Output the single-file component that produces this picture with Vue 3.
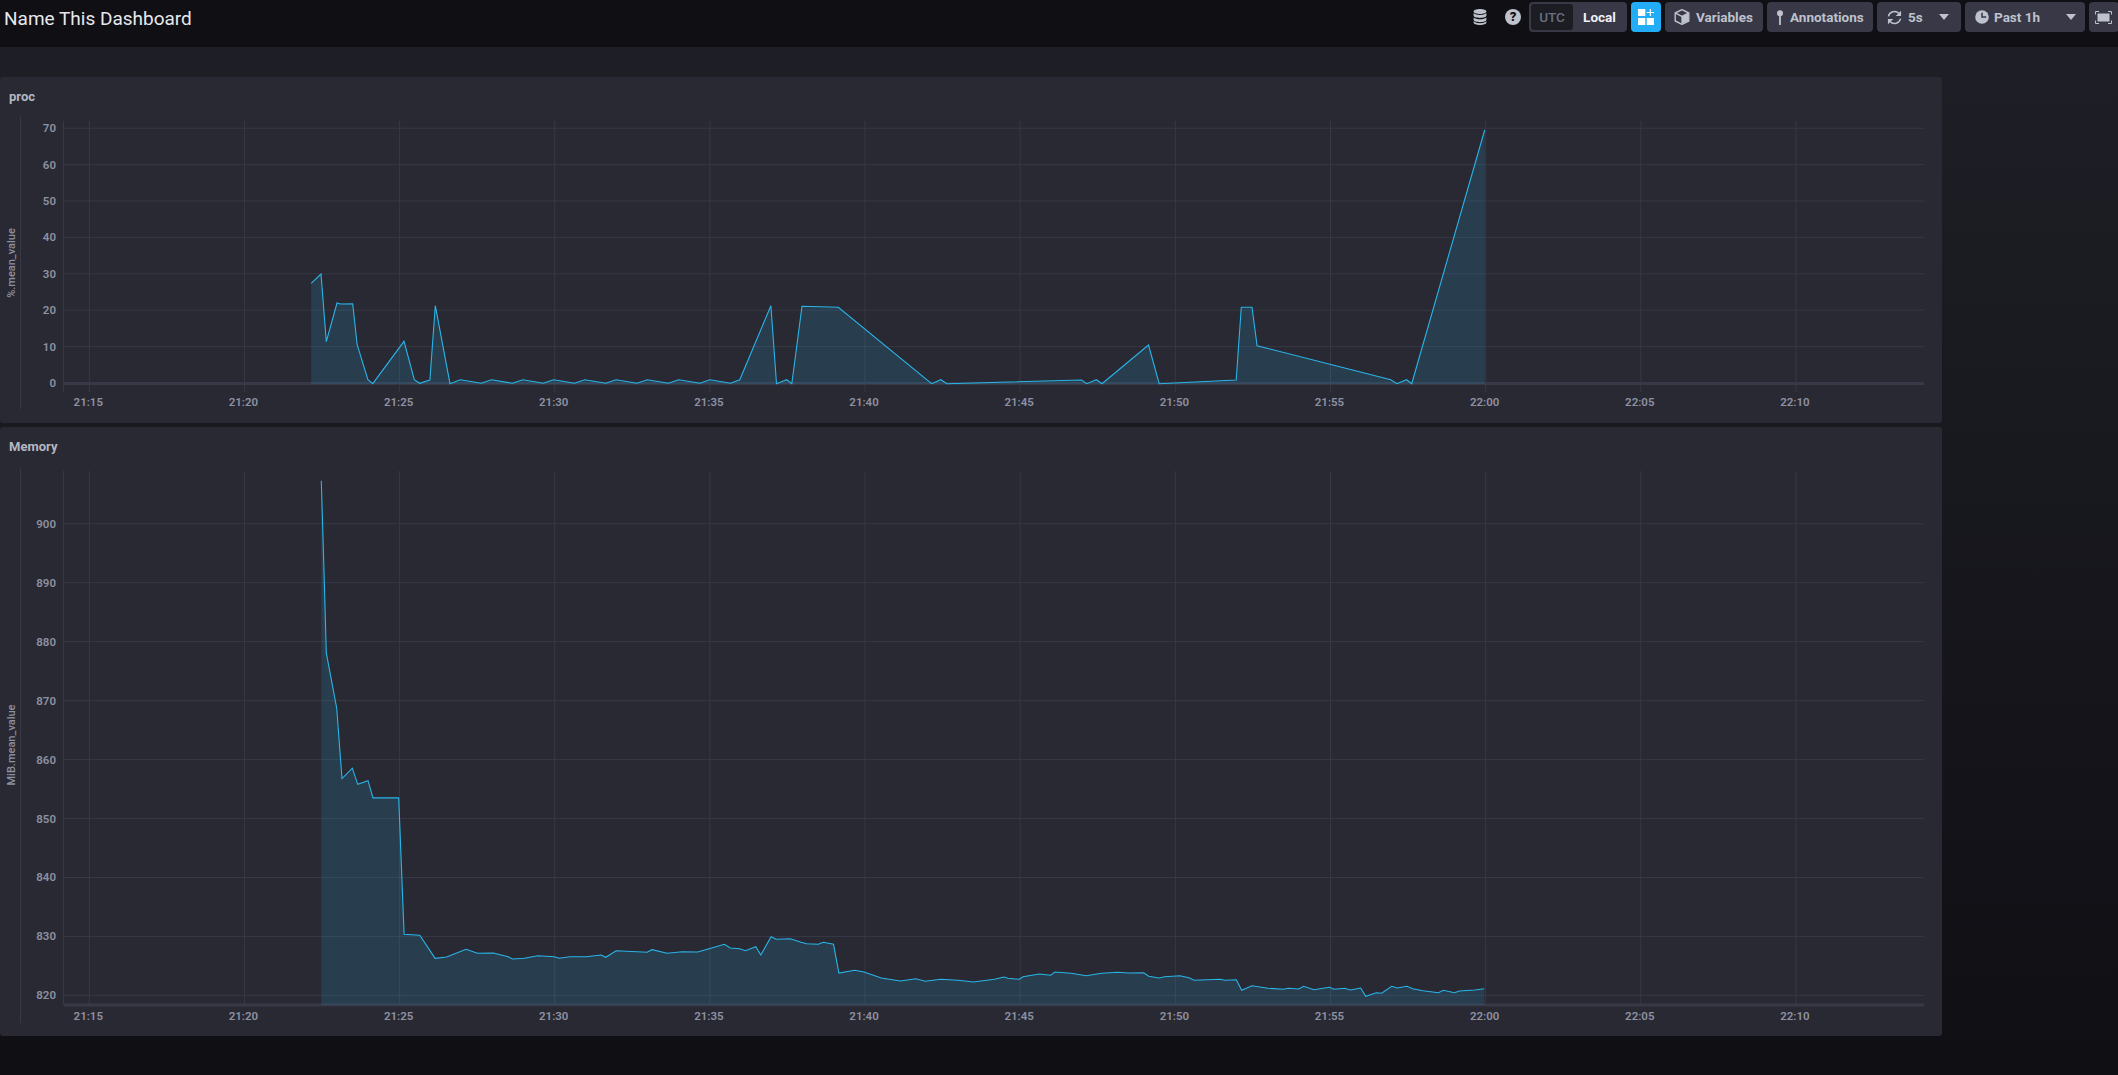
<script setup>
// minutes past 21:15 are turned into pixels the same way for both graphs
const xAt = (minutes) => 89.3 + minutes * 31.03

const timeLabels = ['21:15', '21:20', '21:25', '21:30', '21:35', '21:40', '21:45', '21:50', '21:55', '22:00', '22:05', '22:10']
const timeTicks = timeLabels.map((label, i) => ({ label, x: xAt(i * 5) }))

const procLine = [
  [311.2, 283.3], [321, 274], [326.3, 341.7], [337, 303], [340.6, 304], [352.7, 303.7], [357.1, 344.3], [367.9, 379.7],
  [372.8, 383.7], [404, 341.3], [414.3, 379.7], [419.6, 383.3], [429.9, 380], [435.3, 305.7], [450, 383.7], [460.3, 379.7],
  [481.3, 383.3], [491.5, 379.7], [512.5, 383.3], [522.8, 379.7], [543.3, 383.3], [553.6, 379.7], [574.6, 383.3], [584.8, 379.7],
  [605.8, 383.3], [616, 379.7], [637, 383.3], [647.3, 379.7], [668.3, 383.3], [678.6, 379.7], [700, 383.3], [709.7, 379.7],
  [730.6, 383.3], [739.8, 379.7], [770.9, 305.7], [776.5, 383.7], [786.7, 379.7], [791.8, 383.7], [802, 306.3], [838.3, 307.3],
  [931.6, 383.7], [940.8, 379.7], [946.9, 383.7], [1081.6, 380], [1086.7, 383.7], [1096.4, 379.7], [1102, 383.7], [1148.5, 345],
  [1159.2, 383.7], [1236.2, 380], [1241.3, 307.3], [1252, 307.3], [1257.1, 345.7], [1390.8, 379.7], [1396.9, 383.7],
  [1406.6, 379.7], [1411.7, 383.7], [1484.7, 130]
]

const memoryLine = [
  [321.3, 480.7], [324.3, 581.4], [326.3, 652.9], [336.7, 708.2], [342, 778.6], [352.3, 768.2], [357.7, 784.3], [368, 780.7],
  [373, 797.9], [398.7, 797.9], [404.1, 934.3], [419.8, 935.3], [435.1, 958.3], [446.6, 957], [466.1, 949.3], [477.6, 953.3],
  [493.3, 953], [508.2, 956.7], [512.4, 959], [524.3, 958.3], [537.7, 955.7], [554.5, 956.7], [559.1, 958.3], [569.8, 956.7],
  [585.9, 956.7], [601.2, 955], [605.8, 957.3], [616.1, 950.7], [647.1, 952.3], [652.1, 949.7], [667, 953.3], [682.3, 951.7],
  [697.6, 952], [709.1, 948.7], [724.4, 944.3], [730.2, 948], [739.7, 948.7], [745.5, 950.7], [755.8, 946.7], [760.8, 955],
  [771.1, 936.7], [776.1, 939.3], [790.3, 938.7], [801, 942.3], [806.7, 943.7], [818.2, 944.3], [823.2, 942.3], [833.5, 944.3],
  [838.9, 973], [854.6, 970.3], [864.1, 972], [881.3, 978], [900.5, 981], [915.8, 978.7], [925.3, 981.3], [940.7, 979.3],
  [957.9, 980.3], [973.4, 982], [994.4, 979.3], [1004, 977], [1007.8, 978.3], [1019.3, 979.3], [1023.1, 976.7], [1039.2, 974],
  [1050.7, 975.3], [1054.9, 972], [1071, 973.3], [1086.3, 975.7], [1101.6, 973.3], [1117.7, 972.3], [1128.4, 973], [1143.7, 972.7],
  [1148.7, 976.3], [1159, 978], [1164.7, 976.7], [1180, 975.7], [1188.9, 977.7], [1194.2, 980.3], [1220.2, 979.3], [1224.8, 980.3],
  [1236.3, 979.7], [1241.7, 990.3], [1252, 985.7], [1268.1, 988.3], [1283.4, 989.3], [1288.4, 988.3], [1298.7, 989], [1303.7, 986.3],
  [1314, 989.7], [1329.3, 987.3], [1334.3, 989.3], [1344.6, 988.3], [1350.4, 990], [1360.7, 988], [1365.7, 996.3], [1376.4, 992.7],
  [1381.7, 993.3], [1391.7, 986.3], [1397, 988], [1407, 986.3], [1412.7, 988.7], [1423.1, 990.7], [1438.4, 992.7], [1443.4, 990.3],
  [1454.4, 992.7], [1459.4, 991], [1474.7, 990], [1484.3, 988.7]
]

const toPath = (pts) => pts.map((p, i) => (i ? 'L' : 'M') + p[0] + ' ' + p[1]).join(' ')
const toArea = (pts, base) => {
  const first = pts[0]
  const last = pts[pts.length - 1]
  return toPath(pts) + ` L${last[0]} ${base} L${first[0]} ${base} Z`
}
const yTicks = (start, step, count, zeroY, pxPerStep) =>
  Array.from({ length: count }, (_, i) => ({ label: start + i * step, y: zeroY - i * pxPerStep }))

const graphs = [
  {
    title: 'proc',
    viewBox: '0 107 1942 316',
    height: 316,
    yLabel: '%.mean_value',
    yLabelY: 263,
    axisTop: 117,
    axisBottom: 409,
    plotTop: 121,
    plotBottom: 392,
    band: 383.5,
    ticks: yTicks(0, 10, 8, 383, 36.4),
    line: toPath(procLine),
    area: toArea(procLine, 384)
  },
  {
    title: 'Memory',
    viewBox: '0 457 1942 579',
    height: 579,
    yLabel: 'MiB.mean_value',
    yLabelY: 745,
    axisTop: 468,
    axisBottom: 1023,
    plotTop: 471,
    plotBottom: 1005,
    band: 1005,
    ticks: yTicks(820, 10, 9, 995.4, 58.96),
    line: toPath(memoryLine),
    area: toArea(memoryLine, 1005)
  }
]
</script>

<template>
  <div class="page">
    <header class="page-header">
      <h1 class="dash-name">Name This Dashboard</h1>
      <div class="actions">
        <svg class="icon-db" viewBox="0 0 14 16">
          <path d="M7 0C3.4 0 .6 1 .6 2.4S3.4 4.9 7 4.9s6.4-1.1 6.4-2.5S10.600 0 7 0z" />
          <path d="M.6 4v2.600c0 1.400 2.800 2.400 6.400 2.400s6.400-1 6.400-2.400V4C12.200 5.300 9.800 5.900 7 5.900S1.800 5.300.6 4z" />
          <path d="M.6 8.500v2.300c0 1.400 2.800 2.400 6.400 2.400s6.400-1 6.400-2.400V8.500c-1.200 1.200-3.600 1.800-6.400 1.800S1.800 9.700.6 8.500z" />
          <path d="M.6 12.300v1.200C.6 14.900 3.400 16 7 16s6.400-1.100 6.400-2.500v-1.200c-1.200 1.300-3.600 1.900-6.400 1.900s-5.200-.6-6.400-1.900z" />
        </svg>
        <span class="help">?</span>
        <div class="toggle">
          <span class="toggle-off">UTC</span>
          <span class="toggle-on">Local</span>
        </div>
        <button class="btn btn-add">
          <svg viewBox="0 0 16 16" width="16" height="16">
            <rect x="0" y="0" width="7.300" height="7" fill="#fff" />
            <rect x="0" y="9" width="7.300" height="7" fill="#fff" />
            <rect x="8.700" y="9" width="7.300" height="7" fill="#fff" />
            <path d="M12.350 0v7M8.700 3.500H16" stroke="#fff" stroke-width="1.200" />
          </svg>
        </button>
        <button class="btn btn-vars">
          <svg viewBox="0 0 16 16" width="16" height="16">
            <path d="M8 .7 14.800 4v8L8 15.300 1.200 12V4z" fill="none" stroke="#bec2cc" stroke-width="1.400" stroke-linejoin="round" />
            <path d="M1.600 4.200 8 7.400l6.400-3.200M8 7.400v7.400" fill="none" stroke="#bec2cc" stroke-width="1.300" />
            <path d="M8 7.400l6.400-3.200v7.500L8 14.800z" fill="#bec2cc" />
          </svg>
          <span>Variables</span>
        </button>
        <button class="btn btn-notes">
          <svg viewBox="0 0 8 15" width="8" height="15">
            <circle cx="4" cy="3.200" r="3" fill="#bec2cc" />
            <rect x="3.100" y="5" width="1.800" height="10" rx=".6" fill="#bec2cc" />
          </svg>
          <span>Annotations</span>
        </button>
        <button class="btn btn-refresh">
          <svg viewBox="0 0 16 16" width="15" height="15">
            <path d="M1.500 6.800A6.600 6.600 0 0 1 12.800 3.800M14.500 9.200A6.600 6.600 0 0 1 3.200 12.200" fill="none" stroke="#bec2cc" stroke-width="1.500" />
            <path d="M15 .8v5.700H9.300zM1 15.200V9.500h5.700z" fill="#bec2cc" />
          </svg>
          <span>5s</span>
          <i class="caret"></i>
        </button>
        <button class="btn btn-range">
          <svg viewBox="0 0 14 14" width="14" height="14">
            <circle cx="7" cy="7" r="6.800" fill="#bec2cc" />
            <path d="M7 2.800V7h4.200" fill="none" stroke="#383846" stroke-width="1.500" />
          </svg>
          <span>Past 1h</span>
          <i class="caret caret-tight"></i>
        </button>
        <button class="btn btn-full">
          <svg viewBox="0 0 17 13" width="17" height="13">
            <path d="M.5 3.500V.5h3.500M13 .5h3.500v3M16.500 9.500v3H13M4 12.500H.5v-3" fill="none" stroke="#bec2cc" stroke-width="1" />
            <rect x="2.500" y="2.500" width="12" height="8" fill="#bec2cc" />
          </svg>
        </button>
      </div>
    </header>

    <main class="cells">
      <section v-for="g in graphs" :key="g.title" class="cell">
        <div class="cell-title">{{ g.title }}</div>
        <svg class="graph" :viewBox="g.viewBox" width="1942" :height="g.height">
          <line class="grid" x1="20.5" x2="20.5" :y1="g.axisTop" :y2="g.axisBottom" />
          <line class="grid" x1="63.5" x2="63.5" :y1="g.plotTop" :y2="g.plotBottom" />
          <line
            v-for="t in timeTicks"
            :key="t.label"
            class="grid"
            :x1="t.x"
            :x2="t.x"
            :y1="g.plotTop"
            :y2="g.plotBottom"
          />
          <line
            v-for="t in g.ticks"
            :key="t.label"
            class="grid"
            x1="64"
            x2="1924"
            :y1="t.y"
            :y2="t.y"
          />
          <line class="band" x1="64" x2="1924" :y1="g.band" :y2="g.band" />
          <path class="area" :d="g.area" />
          <path class="series" :d="g.line" />

          <text
            v-for="t in g.ticks"
            :key="'y' + t.label"
            class="tick"
            x="56"
            :y="t.y"
            text-anchor="end"
            dominant-baseline="central"
          >{{ t.label }}</text>
          <text
            v-for="t in timeTicks"
            :key="'x' + t.label"
            class="tick"
            :x="t.x - 1"
            :y="g.band === 1005 ? 1015.5 : 402"
            text-anchor="middle"
            dominant-baseline="central"
          >{{ t.label }}</text>
          <text
            class="y-name"
            text-anchor="middle"
            dominant-baseline="central"
            :transform="`translate(11 ${g.yLabelY}) rotate(-90)`"
          >{{ g.yLabel }}</text>
        </svg>
      </section>
    </main>
  </div>
</template>

<style scoped>
.page {
  width: 2118px;
  height: 1075px;
  overflow: hidden;
  display: flex;
  flex-direction: column;
  background: linear-gradient(180deg, #1f1f27 0, #0f0f14 100%);
  font-family: Roboto, "Liberation Sans", sans-serif;
}

.page-header {
  height: 47px;
  flex: none;
  display: flex;
  justify-content: space-between;
  background-color: #0f0f14;
}

.dash-name {
  margin: 6px 0 0 4px;
  font-size: 19px;
  line-height: 25px;
  font-weight: 400;
  color: #e7e8eb;
}

.actions {
  display: flex;
  align-items: flex-start;
  gap: 4px;
  padding-top: 2px;
  margin-right: -1px;
}

.icon-db {
  width: 14px;
  height: 16px;
  margin-top: 7px;
  fill: #bec2cc;
}

.help {
  width: 16px;
  height: 16px;
  margin: 7px 4px 0 14px;
  border-radius: 50%;
  background-color: #bec2cc;
  color: #0f0f14;
  font-size: 13px;
  font-weight: 900;
  line-height: 16px;
  text-align: center;
}

.toggle {
  width: 98px;
  height: 30px;
  display: flex;
  box-sizing: border-box;
  padding: 2px;
  border-radius: 4px;
  background-color: #383846;
  font-size: 13.5px;
  line-height: 26px;
}

.toggle-off {
  width: 42px;
  text-align: center;
  color: #6b6f80;
  font-weight: 500;
  background-color: #1c1c23;
  border-radius: 3px;
}

.toggle-on {
  flex: 1;
  padding-left: 1px;
  text-align: center;
  color: #f0f1f4;
  font-weight: 700;
}

.btn {
  height: 30px;
  display: flex;
  align-items: center;
  gap: 6px;
  padding: 0;
  border: 0;
  border-radius: 4px;
  background-color: #383846;
  color: #bec2cc;
  font-family: inherit;
  font-size: 13.5px;
  font-weight: 700;
}

.btn-add {
  width: 30px;
  justify-content: center;
  background-color: #22adf6;
}

.btn-vars {
  width: 98px;
  padding-left: 9px;
}

.btn-notes {
  width: 106px;
  padding-left: 9px;
}

.btn-refresh {
  width: 84px;
  padding-left: 10px;
}

.btn-range {
  width: 120px;
  padding-left: 10px;
  gap: 5px;
}

.btn-full {
  width: 30px;
  padding-left: 6px;
}

.caret {
  margin-left: auto;
  margin-right: 12px;
  width: 0;
  height: 0;
  border-left: 5px solid transparent;
  border-right: 5px solid transparent;
  border-top: 6px solid #bec2cc;
}

.caret-tight {
  margin-right: 9px;
}

.cells {
  width: 1942px;
  padding-top: 30px;
  display: flex;
  flex-direction: column;
  gap: 4px;
}

.cell {
  border-radius: 3px;
  background-color: #292933;
}

.cell-title {
  height: 18px;
  padding: 12px 0 0 9px;
  font-size: 13px;
  line-height: 16px;
  font-weight: 700;
  color: #b4b7c2;
}

.graph {
  display: block;
}

.grid {
  stroke: #383846;
  stroke-width: 1;
}

.band {
  stroke: #383846;
  stroke-width: 3;
}

.area {
  fill: rgba(38, 180, 235, 0.15);
}

.series {
  fill: none;
  stroke: #29b5e8;
  stroke-width: 1.1;
  stroke-linejoin: miter;
}

.tick {
  font-size: 11.5px;
  font-weight: 600;
  fill: #8e91a1;
}

.y-name {
  font-size: 11px;
  font-weight: 500;
  fill: #8e91a1;
}
</style>
